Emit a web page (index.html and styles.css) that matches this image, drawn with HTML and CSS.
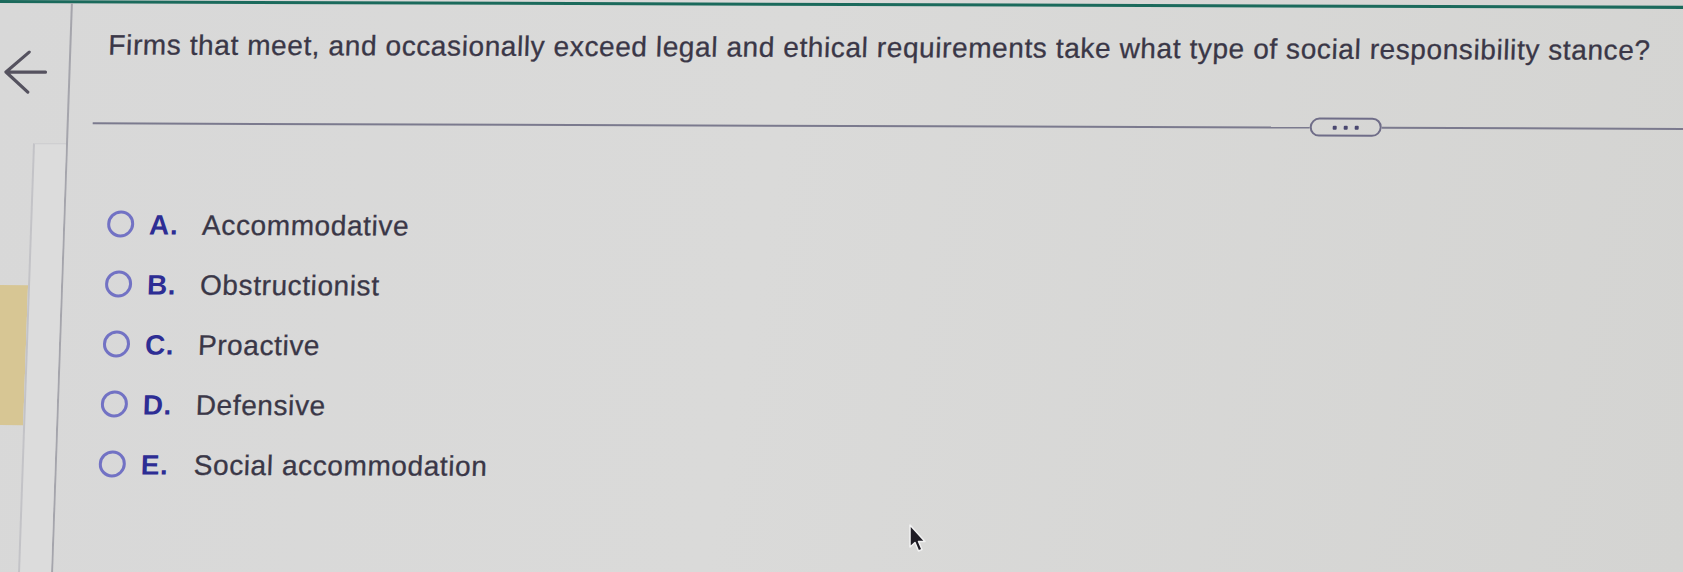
FILE: index.html
```html
<!DOCTYPE html>
<html lang="en">
<head>
<meta charset="utf-8">
<title>Question</title>
<link rel="stylesheet" href="styles.css">
</head>
<body>
<div class="screen">
  <div class="topbar"></div>
  <div class="layout">
    <aside class="rail">
      <div class="rail-head">
        <svg class="back" viewBox="0 0 46 46" fill="none" stroke="#55525f" stroke-width="3.2" stroke-linecap="round" stroke-linejoin="round">
          <path d="M42 22 H2.5 M25 2 L2.5 22 L25 42"/>
        </svg>
      </div>
      <div class="rail-body">
        <div class="strip"><div class="tab"></div></div>
        <div class="panel"></div>
      </div>
    </aside>
    <main class="content">
      <p class="question">Firms that meet, and occasionally exceed legal and ethical requirements take what type of social responsibility stance?</p>
      <div class="divider">
        <span class="rule rule-left"></span>
        <span class="more"><i></i><i></i><i></i></span>
        <span class="rule rule-right"></span>
      </div>
      <ul class="options">
        <li class="option"><span class="radio"></span><span class="letter">A.</span><span class="text">Accommodative</span></li>
        <li class="option"><span class="radio"></span><span class="letter">B.</span><span class="text">Obstructionist</span></li>
        <li class="option"><span class="radio"></span><span class="letter">C.</span><span class="text">Proactive</span></li>
        <li class="option"><span class="radio"></span><span class="letter">D.</span><span class="text">Defensive</span></li>
        <li class="option"><span class="radio"></span><span class="letter">E.</span><span class="text">Social accommodation</span></li>
      </ul>
    </main>
  </div>
</div>
<svg class="cursor" viewBox="0 0 20 32">
  <path d="M2 2 L2 24 L7 19.5 L10.5 28 L14 26.5 L10.5 18.5 L17 18.5 Z" fill="#1e1c24" stroke="#f2f2f2" stroke-width="1.5" stroke-linejoin="round"/>
</svg>
</body>
</html>
```

FILE: styles.css
```css
html, body {
  margin: 0;
  height: 100%;
  overflow: hidden;
}

body {
  background: linear-gradient(100deg, #d8d8d8 0%, #dadad9 45%, #d4d4d2 100%);
  font-family: "Liberation Sans", Arial, sans-serif;
  position: relative;
}

.screen {
  width: 1740px;
  height: 640px;
  display: flex;
  flex-direction: column;
  transform: skew(-2deg, 0.2deg);
  transform-origin: 0 0;
}

.topbar {
  flex: none;
  height: 3px;
  background: #1b6a5c;
}

.layout {
  flex: 1;
  display: flex;
}

.rail {
  flex: none;
  width: 71px;
  border-right: 2px solid #a5a5ac;
  display: flex;
  flex-direction: column;
}

.rail-head {
  flex: none;
  height: 140px;
  box-sizing: border-box;
  padding: 47px 0 0 6px;
}

.back {
  display: block;
  width: 46px;
  height: 46px;
}

.rail-body {
  flex: 1;
  display: flex;
}

.strip {
  width: 38px;
  padding-top: 142px;
}

.tab {
  height: 140px;
  background: #d7c694;
}

.panel {
  flex: 1;
  border-left: 2px solid #c3c3c7;
  border-top: 1px solid #cbcbce;
  background: #dcdcdc;
}

.content {
  flex: 1;
  min-width: 0;
}

.question {
  margin: 26px 0 0 37px;
  font-size: 28px;
  line-height: 32px;
  letter-spacing: 0.6px;
  color: #3a3747;
  -webkit-text-stroke: 0.3px #3a3747;
  white-space: nowrap;
}

.divider {
  display: flex;
  align-items: center;
  height: 19px;
  margin: 52px 0 0 24px;
}

.rule {
  height: 2px;
  background: #7b7a8e;
}

.rule-left {
  flex: none;
  width: 1217px;
}

.rule-right {
  flex: 1;
}

.more {
  flex: none;
  width: 72px;
  height: 19px;
  box-sizing: border-box;
  border: 2px solid #6f6d88;
  border-radius: 10px;
  display: flex;
  align-items: center;
  justify-content: center;
  gap: 7px;
}

.more i {
  width: 4px;
  height: 4px;
  border-radius: 1px;
  background: #4a4870;
}

.options {
  list-style: none;
  margin: 61px 0 0;
  padding: 0;
}

.option {
  height: 60px;
  display: flex;
  align-items: center;
  font-size: 28px;
  line-height: 32px;
  letter-spacing: 0.6px;
}

.radio {
  flex: none;
  width: 27px;
  height: 27px;
  box-sizing: border-box;
  border: 3px solid #7272c4;
  border-radius: 50%;
  margin: 0 15px 0 42px;
}

.letter {
  flex: none;
  width: 53px;
  margin-top: 4px;
  font-weight: bold;
  color: #2d2d94;
}

.text {
  margin-top: 4px;
  color: #3a3747;
  -webkit-text-stroke: 0.3px #3a3747;
}

.cursor {
  position: absolute;
  left: 908px;
  top: 523px;
  width: 20px;
  height: 32px;
}
```
